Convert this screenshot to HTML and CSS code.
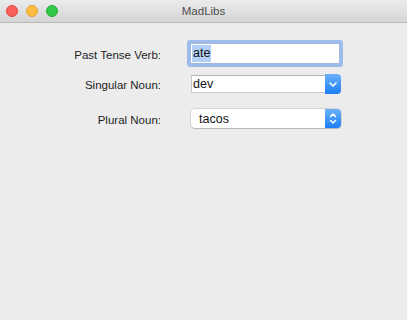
FILE: index.html
```html
<!DOCTYPE html>
<html lang="en">

<head>
    <meta charset="UTF-8">
    <title>MadLibs</title>
    <link rel="stylesheet" href="styles.css">
</head>

<body>
    <div class="window">
        <!-- title bar -->
        <div class="titlebar">
            <div class="lights">
                <span class="light red"></span>
                <span class="light yellow"></span>
                <span class="light green"></span>
            </div>
            <div class="title">MadLibs</div>
            <div></div>
        </div>

        <!-- form -->
        <div class="content">
            <div class="row row-verb">
                <label class="label">Past Tense Verb:</label>
                <div class="textfield"><span class="selected">ate</span></div>
            </div>
            <div class="row row-noun">
                <label class="label">Singular Noun:</label>
                <div class="combo">
                    <span class="combo-text">dev</span>
                    <span class="combo-button">
                        <svg width="16" height="20" viewBox="0 0 16 20">
                            <path d="M5 9 L8 12 L11 9" fill="none" stroke="#fff" stroke-width="1.6" stroke-linecap="round" stroke-linejoin="round"/>
                        </svg>
                    </span>
                </div>
            </div>
            <div class="row row-plural">
                <label class="label">Plural Noun:</label>
                <div class="popup">
                    <span class="popup-text">tacos</span>
                    <span class="popup-button">
                        <svg width="16" height="19" viewBox="0 0 16 19">
                            <path d="M5.5 7.5 L8 5 L10.5 7.5" fill="none" stroke="#fff" stroke-width="1.5" stroke-linecap="round" stroke-linejoin="round"/>
                            <path d="M5.5 11.5 L8 14 L10.5 11.5" fill="none" stroke="#fff" stroke-width="1.5" stroke-linecap="round" stroke-linejoin="round"/>
                        </svg>
                    </span>
                </div>
            </div>
        </div>
    </div>
</body>

</html>
```

FILE: styles.css
```css
html,
body {
    margin: 0;
    padding: 0;
}

body {
    font-family: "Liberation Sans", Arial, sans-serif;
    font-size: 11.5px;
    color: #262626;
    background: #ececec;
}

.window {
    width: 407px;
    height: 320px;
    background: #ececec;
    overflow: hidden;
}

/* title bar */
.titlebar {
    height: 22px;
    display: grid;
    grid-template-columns: 1fr auto 1fr;
    align-items: center;
    background: linear-gradient(#ebebeb, #d5d5d5);
    border-bottom: 1px solid #b9b9b9;
}

.lights {
    display: flex;
    gap: 8px;
    padding-left: 6px;
}

.light {
    width: 12px;
    height: 12px;
    border-radius: 50%;
    box-sizing: border-box;
}

.light.red {
    background: #fc605c;
    border: 1px solid #e0443e;
}

.light.yellow {
    background: #fdbc40;
    border: 1px solid #dea236;
}

.light.green {
    background: #34c84a;
    border: 1px solid #27aa35;
}

.title {
    color: #4d4d4d;
    font-size: 11.5px;
}

/* form rows */
.content {
    display: flex;
    flex-direction: column;
}

.row {
    display: flex;
    align-items: center;
    gap: 29px;
}

.row-verb {
    margin-top: 20px;
    height: 21px;
}

.row-noun {
    margin-top: 10px;
    height: 20px;
}

.row-plural {
    margin-top: 15px;
    height: 19px;
}

.label {
    width: 161px;
    text-align: right;
    color: #1e1e1e;
    padding-top: 2px;
}

/* text field with focus ring */
.textfield {
    box-sizing: border-box;
    width: 150px;
    height: 21px;
    background: #fff;
    border: 1px solid #9fb8dc;
    box-shadow: 0 0 0 3px rgba(125, 168, 235, 0.7);
    border-radius: 1px;
    display: flex;
    align-items: center;
    padding-left: 1px;
    font-size: 12.5px;
}

.selected {
    background: #b3d1f7;
    padding: 1px 1px 2px;
    line-height: 14px;
    color: #111;
}

/* combo box */
.combo {
    display: flex;
    width: 150px;
    height: 20px;
    margin-left: 1px;
    font-size: 12.5px;
}

.combo-text {
    flex: 1;
    box-sizing: border-box;
    height: 18px;
    margin-top: 1px;
    background: #fff;
    border: 1px solid #c8c8c8;
    border-top-color: #b5b5b5;
    border-right: none;
    padding-left: 1px;
    display: flex;
    align-items: center;
    color: #111;
}

.combo-button {
    width: 16px;
    height: 20px;
    border-radius: 0 4px 4px 0;
    background: linear-gradient(#6cb2fb, #1b7ef7);
    display: flex;
}

/* popup button */
.popup {
    display: flex;
    width: 150px;
    height: 19px;
    margin-left: 1px;
    border-radius: 4px;
    box-shadow: 0 0 0 0.5px rgba(0, 0, 0, 0.2), 0 1px 1px rgba(0, 0, 0, 0.15);
    overflow: hidden;
    background: #fff;
    font-size: 12.5px;
}

.popup-text {
    flex: 1;
    padding-left: 8px;
    display: flex;
    align-items: center;
    color: #111;
}

.popup-button {
    width: 16px;
    height: 19px;
    background: linear-gradient(#6cb2fb, #1b7ef7);
    display: flex;
}
```
